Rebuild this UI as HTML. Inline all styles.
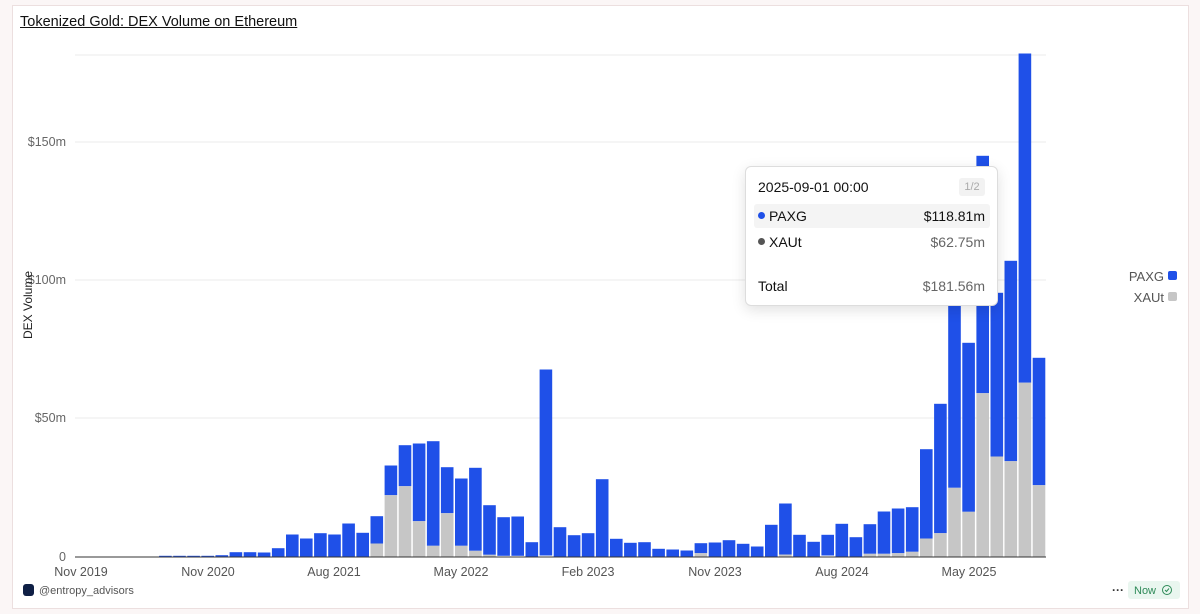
<!DOCTYPE html>
<html><head><meta charset="utf-8"><style>
body{margin:0;width:1200px;height:614px;background:#fbf6f6;font-family:"Liberation Sans",sans-serif;position:relative;overflow:hidden}
.card{position:absolute;left:12px;top:5px;width:1175px;height:602px;background:#fff;border:1px solid #ecdfdf}
.t{position:absolute;white-space:nowrap}
</style></head><body>
<div class="card"></div>
<div class="t" style="left:20px;top:14px;font-size:14.5px;color:#111;text-decoration:underline;">Tokenized Gold: DEX Volume on Ethereum</div>
<svg width="1200" height="614" style="position:absolute;left:0;top:0">
<g stroke="#ebebeb" stroke-width="1">
<line x1="75" y1="55" x2="1046" y2="55"/><line x1="75" y1="142" x2="1046" y2="142"/><line x1="75" y1="280" x2="1046" y2="280"/><line x1="75" y1="418" x2="1046" y2="418"/>
</g>
<g font-size="12.5" fill="#666" text-anchor="end" font-family="Liberation Sans">
<text x="66" y="146">$150m</text><text x="66" y="284">$100m</text><text x="66" y="422">$50m</text><text x="66" y="561">0</text>
</g>
<text transform="translate(32,305) rotate(-90)" font-size="12" fill="#222" text-anchor="middle" font-family="Liberation Sans">DEX Volume</text>
<g fill="#1f50e8">
<rect x="159.1" y="555.8" width="12.6" height="0.7"/><rect x="173.2" y="555.8" width="12.6" height="0.7"/><rect x="187.3" y="555.8" width="12.6" height="0.7"/><rect x="201.4" y="555.8" width="12.6" height="0.7"/>
<rect x="215.5" y="555.2" width="12.6" height="1.3"/><rect x="229.6" y="552.2" width="12.6" height="4.3"/><rect x="243.7" y="552.2" width="12.6" height="4.3"/><rect x="257.8" y="552.5" width="12.6" height="4"/>
<rect x="271.9" y="548.2" width="12.6" height="8.3"/><rect x="286.0" y="534.5" width="12.6" height="22"/><rect x="300.0" y="538.5" width="12.6" height="18"/><rect x="314.1" y="533.2" width="12.6" height="23.3"/>
<rect x="328.2" y="534.5" width="12.6" height="22"/><rect x="342.3" y="523.5" width="12.6" height="33"/><rect x="356.4" y="532.8" width="12.6" height="23.7"/>
<rect x="370.5" y="516.2" width="12.6" height="27.3"/><rect x="384.6" y="465.5" width="12.6" height="29.7"/><rect x="398.7" y="445.2" width="12.6" height="41"/>
<rect x="412.8" y="443.5" width="12.6" height="77.7"/><rect x="426.9" y="441.2" width="12.6" height="104.6"/><rect x="440.9" y="467.2" width="12.6" height="46"/>
<rect x="455.0" y="478.5" width="12.6" height="67.3"/><rect x="469.1" y="467.8" width="12.6" height="83"/><rect x="483.2" y="505.2" width="12.6" height="49.6"/>
<rect x="497.3" y="517.2" width="12.6" height="38.6"/><rect x="511.4" y="516.5" width="12.6" height="39.3"/><rect x="525.5" y="542.2" width="12.6" height="14.3"/><rect x="539.6" y="369.5" width="12.6" height="186"/>
<rect x="553.7" y="527.2" width="12.6" height="29.3"/><rect x="567.8" y="535.2" width="12.6" height="21.3"/><rect x="581.8" y="533.2" width="12.6" height="23.3"/><rect x="595.9" y="479.2" width="12.6" height="77.3"/>
<rect x="610.0" y="538.8" width="12.6" height="17.7"/><rect x="624.1" y="542.8" width="12.6" height="13.7"/><rect x="638.2" y="542.2" width="12.6" height="14.3"/><rect x="652.3" y="548.8" width="12.6" height="7.7"/>
<rect x="666.4" y="549.5" width="12.6" height="7"/><rect x="680.5" y="550.5" width="12.6" height="6"/><rect x="694.6" y="543.2" width="12.6" height="10"/><rect x="708.7" y="542.5" width="12.6" height="14"/>
<rect x="722.7" y="540.2" width="12.6" height="16.3"/><rect x="736.8" y="543.8" width="12.6" height="12.7"/><rect x="750.9" y="546.5" width="12.6" height="10"/><rect x="765.0" y="524.8" width="12.6" height="31.7"/>
<rect x="779.1" y="503.5" width="12.6" height="51"/><rect x="793.2" y="534.8" width="12.6" height="21.7"/><rect x="807.3" y="541.8" width="12.6" height="14.7"/><rect x="821.4" y="534.8" width="12.6" height="20.7"/>
<rect x="835.5" y="523.8" width="12.6" height="32.7"/><rect x="849.6" y="537.2" width="12.6" height="19.3"/><rect x="863.6" y="524.2" width="12.6" height="29.6"/><rect x="877.7" y="511.5" width="12.6" height="42.3"/>
<rect x="891.8" y="508.5" width="12.6" height="44.7"/><rect x="905.9" y="507.2" width="12.6" height="44.6"/><rect x="920.0" y="449.2" width="12.6" height="89.3"/><rect x="934.1" y="403.8" width="12.6" height="129.4"/>
<rect x="948.2" y="266.5" width="12.6" height="221.3"/><rect x="962.3" y="342.8" width="12.6" height="169"/><rect x="976.4" y="155.8" width="12.6" height="237.4"/><rect x="990.5" y="292.8" width="12.6" height="163.7"/>
<rect x="1004.5" y="260.8" width="12.6" height="200.4"/><rect x="1018.6" y="53.5" width="12.6" height="329.2"/><rect x="1032.7" y="357.8" width="12.6" height="127.4"/>
</g>
<g fill="#c6c6c6">
<rect x="370.5" y="543.5" width="12.6" height="13"/><rect x="384.6" y="495.2" width="12.6" height="61.3"/><rect x="398.7" y="486.2" width="12.6" height="70.3"/>
<rect x="412.8" y="521.2" width="12.6" height="35.3"/><rect x="426.9" y="545.8" width="12.6" height="10.7"/><rect x="440.9" y="513.2" width="12.6" height="43.3"/>
<rect x="455.0" y="545.8" width="12.6" height="10.7"/><rect x="469.1" y="550.8" width="12.6" height="5.7"/><rect x="483.2" y="554.8" width="12.6" height="1.7"/>
<rect x="694.6" y="553.2" width="12.6" height="3.3"/><rect x="779.1" y="554.5" width="12.6" height="2"/><rect x="863.6" y="553.8" width="12.6" height="2.7"/><rect x="877.7" y="553.8" width="12.6" height="2.7"/>
<rect x="891.8" y="553.2" width="12.6" height="3.3"/><rect x="905.9" y="551.8" width="12.6" height="4.7"/><rect x="920.0" y="538.5" width="12.6" height="18"/><rect x="934.1" y="533.2" width="12.6" height="23.3"/>
<rect x="948.2" y="487.8" width="12.6" height="68.7"/><rect x="962.3" y="511.8" width="12.6" height="44.7"/><rect x="976.4" y="393.2" width="12.6" height="163.3"/><rect x="990.5" y="456.5" width="12.6" height="100"/>
<rect x="1004.5" y="461.2" width="12.6" height="95.3"/><rect x="1018.6" y="382.7" width="12.6" height="173.8"/><rect x="1032.7" y="485.2" width="12.6" height="71.3"/>
</g>
<line x1="75" y1="557" x2="1046" y2="557" stroke="#333" stroke-width="1"/>
<g font-size="12.5" fill="#555" text-anchor="middle" font-family="Liberation Sans">
<text x="81" y="576">Nov 2019</text><text x="208" y="576">Nov 2020</text><text x="334" y="576">Aug 2021</text><text x="461" y="576">May 2022</text><text x="588" y="576">Feb 2023</text><text x="715" y="576">Nov 2023</text><text x="842" y="576">Aug 2024</text><text x="969" y="576">May 2025</text>
</g>
<g font-size="13" fill="#555" text-anchor="end" font-family="Liberation Sans"><text x="1164" y="281">PAXG</text><text x="1164" y="302">XAUt</text></g>
<rect x="1168" y="271" width="9" height="9" rx="2" fill="#1f50e8"/><rect x="1168" y="292" width="9" height="9" rx="2" fill="#c6c6c6"/>
<rect x="23" y="584" width="11" height="12" rx="3" fill="#0f1f45"/>
<text x="39" y="594" font-size="11" fill="#555" font-family="Liberation Sans">@entropy_advisors</text>
<text x="1112" y="594" font-size="12" fill="#333" font-weight="bold" font-family="Liberation Sans">···</text>
<rect x="1128" y="581" width="52" height="18" rx="3" fill="#e9f6ef"/>
<text x="1134" y="594" font-size="11" fill="#2e8a58" font-family="Liberation Sans">Now</text>
<circle cx="1167" cy="590" r="4.5" fill="none" stroke="#2e8a58" stroke-width="1"/><path d="M1165 590l1.5 1.5 2.5-3" fill="none" stroke="#2e8a58" stroke-width="1"/>
</svg>
<div style="position:absolute;left:745px;top:166px;width:251px;height:138px;background:#fff;border:1px solid #ddd;border-radius:6px;box-shadow:0 4px 14px rgba(0,0,0,.12)"></div>
<div class="t" style="left:758px;top:179px;font-size:14px;color:#111">2025-09-01 00:00</div>
<div class="t" style="left:959px;top:178px;width:26px;height:18px;background:#f2f2f2;border-radius:3px;font-size:11px;color:#aaa;text-align:center;line-height:18px">1/2</div>
<div style="position:absolute;left:754px;top:204px;width:236px;height:24px;background:#f4f4f4;border-radius:3px"></div>
<div style="position:absolute;left:758px;top:212px;width:7px;height:7px;border-radius:50%;background:#1f50e8"></div>
<div class="t" style="left:769px;top:208px;font-size:14px;color:#111">PAXG</div>
<div class="t" style="right:215px;top:208px;font-size:14px;color:#111">$118.81m</div>
<div style="position:absolute;left:758px;top:238px;width:7px;height:7px;border-radius:50%;background:#555"></div>
<div class="t" style="left:769px;top:234px;font-size:14px;color:#111">XAUt</div>
<div class="t" style="right:215px;top:234px;font-size:14px;color:#666">$62.75m</div>
<div class="t" style="left:758px;top:278px;font-size:14px;color:#111">Total</div>
<div class="t" style="right:215px;top:278px;font-size:14px;color:#666">$181.56m</div>
</body></html>
